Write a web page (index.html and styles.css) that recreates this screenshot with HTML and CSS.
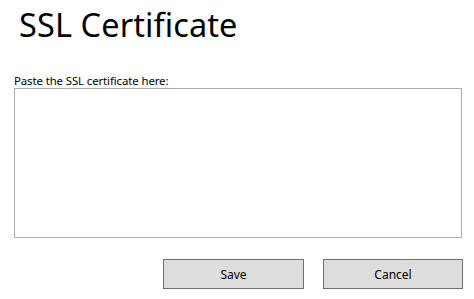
FILE: index.html
```html
<!DOCTYPE html>
<html>
<head>
<meta charset="utf-8">
<link rel="stylesheet" href="styles.css">
</head>
<body>
<div class="page">
  <h1 class="title">SSL Certificate</h1>
  <label class="label" for="cert">Paste the SSL certificate here:</label>
  <textarea class="cert" id="cert"></textarea>
  <div class="actions">
    <button class="btn btn-save">Save</button>
    <button class="btn">Cancel</button>
  </div>
</div>
</body>
</html>
```
FILE: styles.css
```css
html, body {
  margin: 0;
  padding: 0;
  background: #ffffff;
}
.page {
  width: 474px;
  height: 299px;
  box-sizing: border-box;
  padding: 0 11px 0 14px;
  display: flex;
  flex-direction: column;
  font-family: "Noto Sans", "Open Sans", sans-serif;
  color: #000;
}
.title {
  margin: 5px 0 0 5px;
  font-weight: normal;
  font-size: 32.5px;
  line-height: 40px;
  letter-spacing: 0.1px;
}
.label {
  margin-top: 29px;
  font-size: 11.4px;
  line-height: 14px;
  letter-spacing: -0.1px;
}
.cert {
  margin: 0;
  width: 448px;
  height: 150px;
  box-sizing: border-box;
  border: 1px solid #abadb3;
  resize: none;
  outline: none;
  padding: 0;
}
.actions {
  display: flex;
  justify-content: flex-end;
  gap: 19px;
  margin-top: 21px;
}
.btn {
  width: 140px;
  height: 30px;
  box-sizing: border-box;
  background: #dddddd;
  border: 1px solid #707070;
  border-radius: 0;
  font-family: "Noto Sans", "Open Sans", sans-serif;
  font-size: 12px;
  color: #000;
  padding: 0;
}
.btn-save {
  width: 141px;
}
```
